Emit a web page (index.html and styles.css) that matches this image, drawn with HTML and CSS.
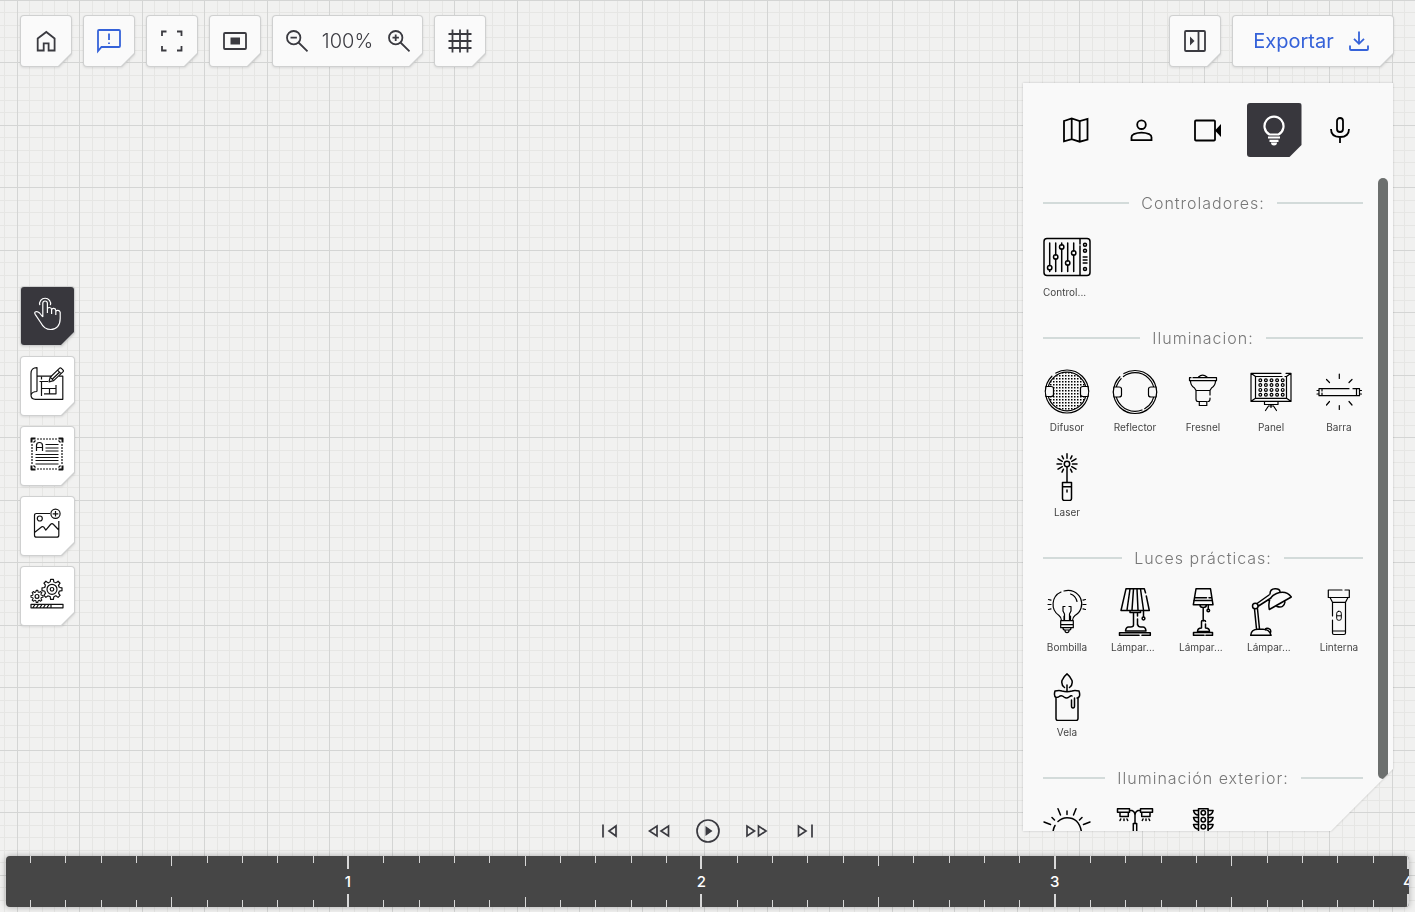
FILE: index.html
```html
<!DOCTYPE html>
<html lang="es">
<head>
    <meta charset="UTF-8">
    <meta name="viewport" content="width=device-width, initial-scale=1.0">
    <title>Editor de escenas</title>
    <link rel="stylesheet" href="styles.css">
</head>
<body>
    <div class="editor">
        <header class="topbar">
            <button type="button" class="btn" aria-label="Inicio">
                <svg width="24" height="24" viewBox="0 0 24 24"><path d="M3.7 21.5V9.5L12.3 3l8.3 6.5v12h-6v-7.2H9.7v7.2z"/></svg>
            </button>
            <button type="button" class="btn btn-blue" aria-label="Comentarios">
                <svg width="26" height="26" viewBox="0 0 26 26"><path d="M2 23V3q0-1 1-1h20q1 0 1 1v15q0 1-1 1H5.5zM13 5.500v6.500M13 14.500v1.500"/></svg>
            </button>
            <button type="button" class="btn" aria-label="Pantalla completa">
                <svg width="24" height="24" viewBox="0 0 24 24"><path d="M2 7V2.500H6.500M17 2.500h4.500V7M21.500 17v4.500H17M6.500 21.500H2V17"/></svg>
            </button>
            <button type="button" class="btn" aria-label="Ajustar">
                <svg width="26" height="24" viewBox="0 0 26 24"><rect x="2" y="4" width="22" height="16" rx="1"/><path class="fill" d="M8.500 8.500h9.500v7H8.500z"/></svg>
            </button>
            <div class="btn zoom">
                <button type="button" class="plain" aria-label="Alejar">
                    <svg width="24" height="24" viewBox="0 0 24 24"><circle cx="8.700" cy="8.700" r="6.700"/><path d="M13.500 13.500l9 8.800M5.500 8.700h6.400"/></svg>
                </button>
                <span class="zoom-value">100%</span>
                <button type="button" class="plain" aria-label="Acercar">
                    <svg width="24" height="24" viewBox="0 0 24 24"><circle cx="8.700" cy="8.700" r="6.700"/><path d="M13.500 13.500l9 8.800M5.500 8.700h6.400M8.700 5.500v6.400"/></svg>
                </button>
            </div>
            <button type="button" class="btn" aria-label="Cuadrícula">
                <svg width="24" height="24" viewBox="0 0 24 24"><path d="M4.500.5v23M12 .5v23M19.500.5v23M.5 5h23M.5 12h23M.5 19h23"/></svg>
            </button>
            <button type="button" class="btn push" aria-label="Ocultar panel">
                <svg width="24" height="24" viewBox="0 0 24 24"><rect x="2" y="2" width="20" height="20" rx="1"/><path d="M15.500 2v20"/><path class="fill" d="M7 7.500l4.500 4.500L7 16.500z"/></svg>
            </button>
            <button type="button" class="btn btn-blue export">
                <span>Exportar</span>
                <svg width="24" height="24" viewBox="0 0 24 24"><path d="M12 2.500v12M7 9.800l5 5 5-5M3 16.500V20q0 1 1 1h16q1 0 1-1v-3.500"/></svg>
            </button>
        </header>

        <nav class="tools" aria-label="Herramientas">
            <button type="button" class="btn tool active" aria-label="Seleccionar">
                <svg width="34" height="34" viewBox="0 0 34 34"><path d="M12.800 20V6.300a2.300 2.300 0 0 1 4.600 0V16M17.400 12.500q0-2 2-2t2.200 2V17M21.600 13q.2-1.800 2.200-1.600t2 2V18M25.800 14.500q.3-1.400 2.200-1.200t2.200 2V21.500c0 7-3.700 11-9.500 11-5.200 0-7.700-2.500-9.700-6.500l-5.800-8.700q-1.200-2 .6-2.600t3.800 1.300l3.200 4"/><path d="M9.800 8.200a5.500 5.500 0 1 1 10.600 0"/></svg>
            </button>
            <button type="button" class="btn tool" aria-label="Plano">
                <svg width="34" height="34" viewBox="0 0 34 34"><path d="M7 24.500V.7Q1 .7 1 6.500V28q0 4.300 4.500 4.300h27.300V9.200H29M7 9.200h14.500M1 28q1-3.500 6-3.500"/><path d="M11.500 9.500v3M9.500 14.500H18M11.500 14.500V29M11.500 21.500h14.500V18M19.500 21.500v5.300M14 26.800h12v-5.300"/><path d="M19 14.800l1.200-4.600 9.200-8.800q1-.9 2 0l1.500 1.500q1 1 0 2l-9.200 8.700zM20.200 10.200l3.400 3.400M27.500 3.200l3.500 3.500M22.500 12l7-6.800"/></svg>
            </button>
            <button type="button" class="btn tool" aria-label="Texto">
                <svg width="34" height="34" viewBox="0 0 34 34"><path class="dashed" d="M7 2h20M7 32h20M2 7v20M32 7v20"/><path class="bold" d="M1.500 5.500V1.500h4M28.500 1.500h4v4M32.500 28.500v4h-4M5.500 32.500h-4v-4"/><path d="M3.500 5.500l2-2M28.500 3.500l2 2M3.500 28.500l2 2M30.500 28.500l-2 2"/><path d="M6.500 14V8.500q0-3 3-3t3 3V14M6.500 10.500h6M15.500 7.500h13M15.500 11h13M15.500 14h13M5.500 17.500h23M5.500 20.500h23M5.500 23.500h23M5.500 27h23"/></svg>
            </button>
            <button type="button" class="btn tool" aria-label="Imagen">
                <svg width="34" height="34" viewBox="0 0 34 34"><path d="M20 6.500H6.500q-2 0-2 2v19.700q0 2 2 2h20.300q2 0 2-2V14M4.500 25.500l7.300-5.700q1-.7 2 .3l2 3 4.700-5.600q1.500-1.700 3 0l5.300 5.500"/><circle cx="9.800" cy="11.500" r="2.500"/><circle cx="25.500" cy="6.800" r="4.600"/><path d="M25.500 4v5.600M22.700 6.800h5.600"/></svg>
            </button>
            <button type="button" class="btn tool" aria-label="Ajustes">
                <svg width="34" height="34" viewBox="0 0 34 34">
                    <defs><path id="tooth" d="M7.300-1.800 10-1.400V1.400L7.300 1.800A7.500 7.500 0 0 1 6.430 3.890"/></defs>
                    <g id="gear" transform="translate(22 12.300)">
                        <use href="#tooth"/><use href="#tooth" transform="rotate(45)"/><use href="#tooth" transform="rotate(90)"/><use href="#tooth" transform="rotate(135)"/><use href="#tooth" transform="rotate(180)"/><use href="#tooth" transform="rotate(225)"/><use href="#tooth" transform="rotate(270)"/><use href="#tooth" transform="rotate(315)"/>
                    </g>
                    <circle cx="22" cy="12.300" r="5"/><circle cx="22" cy="12.300" r="1.800"/>
                    <use class="small-gear" href="#gear" transform="translate(-6.200 12) scale(.6)"/>
                    <circle cx="7" cy="19.400" r="1.900"/>
                    <path d="M1 27.300h32v3.500H1zM3 30.500l2-3M6.500 30.500l2-3M10 30.500l2-3M13.500 30.500l2-3M17 30.500l2-3M21 27.500v3"/>
                </svg>
            </button>
        </nav>

        <aside class="panel-wrap">
            <div class="panel">
                <nav class="tabs" aria-label="Categorías">
                    <button type="button" class="tab" aria-label="Escenarios">
                        <svg width="28" height="28" viewBox="0 0 28 28"><path d="M2 5l7.700-2.500 8 2.500 7.800-2v20.500l-7.800 2.200-8-2.500-7.700 2.200zM9.700 2.500v20.700M17.700 5v20.700"/></svg>
                    </button>
                    <button type="button" class="tab" aria-label="Personajes">
                        <svg width="28" height="28" viewBox="0 0 28 28"><circle cx="13.500" cy="8.700" r="4.300"/><path d="M3.500 24.200v-3q0-2 2.200-3Q9.500 16.700 13.500 16.700t7.800 1.500q2.200 1 2.200 3v3z"/></svg>
                    </button>
                    <button type="button" class="tab" aria-label="Cámaras">
                        <svg width="28" height="28" viewBox="0 0 28 28"><rect x="1" y="4.500" width="20" height="20" rx="1"/><path class="fill" d="M21 14.500l6-6.500v13z"/></svg>
                    </button>
                    <button type="button" class="tab active" aria-label="Luces">
                        <svg width="28" height="32" viewBox="0 0 28 32"><path d="M9.500 20.500a9.500 9.500 0 1 1 9 0z"/><path d="M8 23.500h12M9.500 26.800h9"/><path class="fill" d="M11 28.500h6q0 3-3 3t-3-3z"/></svg>
                    </button>
                    <button type="button" class="tab" aria-label="Sonido">
                        <svg width="28" height="28" viewBox="0 0 28 28"><rect x="11" y="2" width="6" height="14" rx="3"/><path d="M5 13q0 8 9 8t9-8M14 21v6"/></svg>
                    </button>
                </nav>

                <div class="scroll">
                    <div class="sections">
                        <section class="section">
                            <h2>Controladores:</h2>
                            <div class="items">
                                <button type="button" class="item"><svg viewBox="0 0 48 48"><rect x="1" y="5.500" width="46" height="37" rx="3"/><path d="M37 6v5M37 13v29M6.700 10v22.500M6.700 37v1.500M12.700 10v12M12.700 26v12.500M18.700 10v2M18.700 16v22.500M24.700 10v18M24.700 32v6.500M30.700 10v8M30.700 22v16.500M40.200 24H44M40.200 27H44M40.200 30H44"/><circle cx="6.700" cy="34.700" r="2.200"/><circle cx="12.700" cy="24" r="2.200"/><circle cx="18.700" cy="14" r="2.200"/><circle cx="24.700" cy="30" r="2.200"/><circle cx="30.700" cy="20" r="2.200"/><circle cx="42" cy="11.700" r="1.500"/><circle cx="42" cy="17.700" r="1.500"/><circle cx="42" cy="36" r="1.500"/></svg><span class="cut">Control...</span></button>
                            </div>
                        </section>

                        <section class="section">
                            <h2>Iluminacion:</h2>
                            <div class="items">
                                <button type="button" class="item thin"><svg viewBox="0 0 48 48"><defs><pattern id="mesh" width="3" height="3" patternUnits="userSpaceOnUse"><path class="fill" d="M1 1h1.500v1.500H1z"/></pattern></defs><circle class="mesh" cx="24" cy="23.500" r="19.300"/><circle cx="24" cy="23.500" r="21.500" stroke-dasharray="84 5 46 0"/><path class="paper" d="M3 18.500h5q2.500 0 2.500 2v6q0 2-2.500 2H3q-1.500-5 0-10zM45 18.500h-5q-2.500 0-2.500 2v6q0 2 2.500 2h5q1.500-5 0-10z"/></svg><span>Difusor</span></button>
                                <button type="button" class="item thin"><svg viewBox="0 0 48 48"><circle cx="24" cy="24" r="21.500" stroke-dasharray="84 5 46 0"/><circle cx="24" cy="24" r="19.300" stroke-dasharray="20 3 52 3 44 0"/><path class="paper" d="M3 19h5q2.500 0 2.500 2v6q0 2-2.500 2H3q-1.500-5 0-10zM45 19h-5q-2.500 0-2.500 2v6q0 2 2.500 2h5q1.500-5 0-10z"/></svg><span>Reflector</span></button>
                                <button type="button" class="item thin"><svg viewBox="0 0 48 48"><path d="M14 9.700h23.500v3H10.500v-3h1.500M19.500 9q4-3.800 8.500 0M11.500 13q0 4.500 4 7l1.500 2.500h14l1.500-2.500q4-2.500 4-7M17 22v9q0 2.500 2 2.500h8M31 22v5M31 30v1q0 2.500-2 2.500M20.300 33.500v4h7.500v-4"/></svg><span>Fresnel</span></button>
                                <button type="button" class="item thin"><svg viewBox="0 0 48 48"><path d="M34 5.300H4v28h40v-28h-5M8.500 8.500H35M38 8.500h1.500v21.800H8.500V8.500M4 5.300l4.500 3.200M44 5.300l-4.500 3.200M4 33.300l4.500-3M44 33.300l-4.500-3M17.500 33.500v3h13.500v-3M24 36.500v3M21.500 38h5M21.500 38l-3 4.500M26.500 38l3 4.500"/><g class="bulbs"><path d="M13.300 12.300h22.500M13.300 17.100h22.500M13.300 21.900h22.500M13.300 26.700h22.500"/></g><g class="bulb-holes"><path d="M13.300 12.300h22.500M13.300 17.100h22.500M13.300 21.900h22.500M13.300 26.700h22.500"/></g></svg><span>Panel</span></button>
                                <button type="button" class="item thin"><svg viewBox="0 0 48 48"><path d="M34 20.700H4v7h40.500v-7H38M7 21v2M7 25v2.500M41.500 21v6.500M3.500 22.500H2M3.500 26H2M44.500 22.500h2M44.500 26h2M24.300 6v4.500M24.300 37.500v4M11.500 11.500l3 3M37 11.500l-3 3M11.500 37l3-3.500M37 37l-3-3.500"/></svg><span>Barra</span></button>
                                <button type="button" class="item"><svg viewBox="0 0 48 48"><circle cx="24" cy="11" r="2.700"/><path d="M24 .8v4.500M24 14v15M14 11h4.500M29.500 11h4.500M15 5.800l4.300 2.500M33 5.800l-4.300 2.500M15 16.200l4.300-2.500M33 16.200l-4.300-2.500M19 2.800l1.500 3M29 2.800l-1.500 3M19 19.200l1.500-3M29 19.200l-1.500-3"/><path d="M19.500 29.500h9v16q0 2-2 2h-5q-2 0-2-2zM19.500 33.700h9M24 37v2"/></svg><span>Laser</span></button>
                            </div>
                        </section>

                        <section class="section">
                            <h2>Luces prácticas:</h2>
                            <div class="items">
                                <button type="button" class="item thin"><svg viewBox="0 0 48 48"><path d="M21 3a13.500 13.500 0 0 1 11 24.500q-2.500 2-2.500 5h-2V28M18 4a13.500 13.500 0 0 0-2 23.500q2.500 2 2.500 5h2.500V28M27.500 6q5 1.500 6.500 7.500M21.500 32V26l-1.500-3v-4.500h2M26.500 32V26l1.500-3v-4.500h-2M17.700 32.700h12.600v4H17.700zM17.700 36.700h12.600v3H17.700zM20 40q0 2 2 2h4q2 0 2-2M22 42.500q0 2.200 2 2.200t2-2.200M5 16.500h3M5.500 11.500l2.500.7M5.500 21.500l2.500-.7M43 16.500h-3M42.500 11.500l-2.500.7M42.500 21.500l-2.500-.7"/></svg><span>Bombilla</span></button>
                                <button type="button" class="item"><svg viewBox="0 0 48 48"><path d="M15 .8h18.300l1.200 4M35.300 8l3 14.500H10L15 .8M19 1l-3 21M22.500 1l-1.500 21M26 1l1 21M29.500 1l3 21M19 22.500v2h10.500v-2M22.500 25v12M26.500 25v3M26.500 31v6M22.500 37q0 2-3 2h-2q-2.500 0-3 4h20.500q-.5-4-3-4h-2q-3 0-3-2M28 47.300H8.500v-2.600h30.800v2.600H31M32.500 22.500v6"/><circle cx="32.500" cy="30.500" r="1.400"/></svg><span class="cut">Lámpar...</span></button>
                                <button type="button" class="item"><svg viewBox="0 0 48 48"><path d="M17 .8h14.500l2.500 16H14.300zM15.500 9.700h12M30 9.700h2.500M14.800 12.500h18.500M21 17q0 2.500 3.200 2.500t3.200-2.500M24.200 19.500V33M22.500 40v-6.500q0-1 1-1h2q1 0 1 1M26.500 36v4M22.500 40q-4 0-4 3.500h12q0-3.500-4-3.500M29.300 17v4M25 47.300H14.500v-2.800h19v2.800H27"/><circle cx="29.300" cy="22.500" r="1.300"/></svg><span class="cut">Lámpar...</span></button>
                                <button type="button" class="item"><svg viewBox="0 0 48 48"><circle cx="8.300" cy="18" r="2.800"/><path d="M10 15.500L22 7M11.500 18L24 10M7.500 21l2 20M10.500 21l2 20M3.700 47.300q.5-6 7.300-6h5q6.500 0 8 6zM18.500 42q0-2.500 3-1.500t2 4M22.300 21.500Q20 9 29.500 5.500T44.300 9zM23 6q0-5 5-5.200T33 4M30 18.500q7 2 8-4.500"/></svg><span class="cut">Lámpar...</span></button>
                                <button type="button" class="item thin"><svg viewBox="0 0 48 48"><path d="M30 2h4.300v7.500h-21V2H27M15 9.500l2.500 4.800h13L33 9.500M17.500 14.500V28M17.500 32v13q0 1.500 1.500 1.500h10q1.500 0 1.500-1.500V14.500M17.500 43h13"/><rect class="hair" x="21.700" y="23.300" width="4.600" height="9" rx="2"/><path class="hair" d="M22 27.800h4"/></svg><span>Linterna</span></button>
                                <button type="button" class="item"><svg viewBox="0 0 48 48"><path d="M21.500 14.500q-3.500-2.500-2.500-7Q20.500 3.500 24 .8q3.500 2.700 5 6.700 1 4.500-2.500 7M24 12V18M12 18q4.500-1 7 0 5 1.500 10 0 2.500-1 7 0 1 3 .5 5-.5 2-2.500 2M12 18q-1.500 5 1 6.500 2.500 0 4-1.500 2-1 4 1 2.500 2 5 0t3-1M13 24.500v21q0 2 2 2h18q2 0 2-2V24.500M28.500 27v6q0 2 1.500 2t1.500-2v-8"/></svg><span>Vela</span></button>
                            </div>
                        </section>

                        <section class="section">
                            <h2>Iluminación exterior:</h2>
                            <div class="items">
                                <button type="button" class="item" aria-label="Sol"><svg viewBox="0 0 48 48"><path d="M10 24q.5-4 2-6.500M15 13.500q4-3.700 9-3.700 12 0 14.500 14.200M15 .8L17.500 7M24 3v3.500M33 .8L30.500 7M9 9.500l2.500 2.500M39 9.500l-2.500 2.500M1 14l6.500 2.500M47 14l-6.500 2.500M1 24h46"/></svg></button>
                                <button type="button" class="item" aria-label="Farola"><svg viewBox="0 0 48 48"><path d="M6.500.8h12v3.500h-12zM9 4.500v4h8.300v-4M29.500.8h12v3.500h-12zM30.700 4.500v4H39v-4M18.500 2.300q5.500 0 5.500 5 0-5 5.500-5M24 5v10.500M22.300 46V15.500h3.400V46M9.700 11l-.7 1.500M13 11v1.500M16 11l.7 1.500M32 11l-.7 1.500M35 11v1.500M38 11l.7 1.500"/></svg></button>
                                <button type="button" class="item" aria-label="Semáforo"><svg viewBox="0 0 48 48"><rect x="19.500" y=".8" width="9.600" height="24"/><circle cx="24.300" cy="4.700" r="2.200"/><circle cx="24.300" cy="11.700" r="2.200"/><circle cx="24.300" cy="18.700" r="2.200"/><path d="M19.500 2.500h-5q1 4.500 5 4.500M19.500 9.500h-5q1 4.500 5 4.500M19.500 16.500h-5q1 4.500 5 4.500M29.100 2.500h5q-1 4.500-5 4.500M29.100 9.500h5q-1 4.500-5 4.500M29.100 16.500h5q-1 4.500-5 4.500"/></svg></button>
                            </div>
                        </section>
                    </div>
                    <div class="scrollbar"></div>
                </div>
            </div>
        </aside>

        <div class="playback">
            <button type="button" class="plain" aria-label="Ir al inicio"><svg width="24" height="24" viewBox="0 0 24 24"><path d="M5 5.500v13M18 7v10l-7-5z"/></svg></button>
            <button type="button" class="plain" aria-label="Retroceder"><svg width="24" height="24" viewBox="0 0 24 24"><path d="M10 7v10l-7.500-5zM21.500 7v10L14 12z"/></svg></button>
            <button type="button" class="plain" aria-label="Reproducir"><svg width="24" height="24" viewBox="0 0 24 24"><circle cx="12" cy="12" r="11"/><path class="fill" d="M9.500 7l7 5-7 5z"/></svg></button>
            <button type="button" class="plain" aria-label="Avanzar"><svg width="24" height="24" viewBox="0 0 24 24"><path d="M2 7v10l7.500-5zM13.500 7v10l7.500-5z"/></svg></button>
            <button type="button" class="plain" aria-label="Ir al final"><svg width="24" height="24" viewBox="0 0 24 24"><path d="M4.500 7v10l7.500-5zM18 5.500v13"/></svg></button>
        </div>

        <footer class="timeline" id="timeline"></footer>
    </div>

    <script>
        const timeline = document.getElementById('timeline');

        for (let i = 1; i <= 40; i++) {
            const cell = document.createElement('div');
            cell.className = 'cell';
            if (i % 10 === 0) {
                cell.classList.add('second');
                const label = document.createElement('span');
                label.textContent = i / 10;
                cell.appendChild(label);
            } else if (i % 5 === 0) {
                cell.classList.add('half');
            }
            timeline.appendChild(cell);
        }
    </script>
</body>
</html>
```
FILE: styles.css
```css
* {
    box-sizing: border-box;
}
body {
    margin: 0;
    font-family: Inter, "Liberation Sans", sans-serif;
    color: #3a3a40;
    background-color: #f1f1f0;
    /* two lines per tile: 125px for the large squares, 25px for the small ones */
    background-image:
        linear-gradient(90deg, #d4d5d4 1px, transparent 1px, transparent 62px, #d4d5d4 62px, #d4d5d4 63px, transparent 63px),
        linear-gradient(#d4d5d4 1px, transparent 1px, transparent 62px, #d4d5d4 62px, #d4d5d4 63px, transparent 63px),
        linear-gradient(90deg, #e6e6e4 1px, transparent 1px, transparent 12px, #e6e6e4 12px, #e6e6e4 13px, transparent 13px),
        linear-gradient(#e6e6e4 1px, transparent 1px, transparent 12px, #e6e6e4 12px, #e6e6e4 13px, transparent 13px);
    background-size: 125px 125px, 125px 125px, 25px 25px, 25px 25px;
    background-position: 17px 0;
}
button {
    font: inherit;
    color: inherit;
    border: none;
    padding: 0;
    background: none;
    cursor: pointer;
}
svg {
    display: block;
    fill: none;
    stroke: currentColor;
    stroke-width: 1.8;
}
.fill {
    fill: currentColor;
    stroke: none;
}
.editor {
    display: grid;
    grid-template-columns: auto 1fr 370px;
    grid-template-rows: auto 1fr auto auto;
    height: 100vh;
    overflow: hidden;
}

/* top bar */
.topbar {
    grid-area: 1 / 1 / 2 / -1;
    display: flex;
    gap: 11px;
    padding: 15px 21px 16px 20px;
    filter: drop-shadow(0 1px 1px rgba(0, 0, 0, 0.1));
}
.btn {
    position: relative;
    isolation: isolate;
    display: flex;
    align-items: center;
    justify-content: center;
    width: 52px;
    height: 52px;
    border-radius: 4px;
    background-color: #cfd0d0;
    clip-path: polygon(0 0, 100% 0, 100% calc(100% - 13px), calc(100% - 13px) 100%, 0 100%);
}
.btn::before {
    content: "";
    position: absolute;
    inset: 1px;
    z-index: -1;
    border-radius: 3px;
    background-color: #fafafa;
    clip-path: polygon(0 0, 100% 0, 100% calc(100% - 13px), calc(100% - 13px) 100%, 0 100%);
}
.btn-blue {
    color: #3562d9;
}
.zoom {
    width: 151px;
    gap: 13px;
}
.zoom-value {
    width: 52px;
    font-size: 20px;
    font-weight: 300;
    text-align: center;
}
.push {
    margin-left: auto;
}
.export {
    width: 162px;
    gap: 13px;
    padding-right: 2px;
    font-size: 20px;
}

/* left tools */
.tools {
    grid-area: 1 / 1 / -1 / 2;
    align-self: center;
    display: flex;
    flex-direction: column;
    gap: 10px;
    padding-left: 20px;
    filter: drop-shadow(0 1px 1px rgba(0, 0, 0, 0.1));
}
.tool {
    width: 55px;
    height: 60px;
    padding: 0 1px 4px 0;
    color: #111;
}
.tool::before {
    background-color: #fff;
}
.tool svg {
    stroke-width: 1.2;
    stroke-linejoin: round;
}
.tool.active {
    color: #fff;
}
.tool.active::before {
    background-color: #38373d;
}
.dashed {
    stroke-dasharray: 2 1;
}
.bold {
    stroke-width: 2;
}
.small-gear {
    stroke-width: 1.8;
}

/* right panel */
.panel-wrap {
    grid-area: 2 / 3 / 4 / 4;
    min-height: 0;
    margin: 0 22px 25px -22px;
    filter: drop-shadow(0 0 1px rgba(0, 0, 0, 0.2));
}
.panel {
    display: flex;
    flex-direction: column;
    height: 100%;
    padding-top: 20px;
    background-color: #f9f9f9;
    clip-path: polygon(0 0, 100% 0, 100% calc(100% - 62px), calc(100% - 62px) 100%, 0 100%);
}
.tabs {
    display: flex;
    justify-content: center;
    gap: 11px;
    margin-bottom: 21px;
}
.tab {
    display: flex;
    align-items: center;
    justify-content: center;
    width: 55px;
    height: 54px;
    border-radius: 3px;
    color: #000;
}
.tab.active {
    color: #fff;
    background-color: #38373d;
    clip-path: polygon(0 0, 100% 0, 100% calc(100% - 12px), calc(100% - 12px) 100%, 0 100%);
}
.tab.active svg {
    stroke-width: 2.2;
}
.scroll {
    flex: 1;
    min-height: 0;
    display: flex;
    justify-content: space-between;
    overflow: hidden;
    padding: 0 5px 0 20px;
}
.scrollbar {
    width: 10px;
    margin-bottom: 52px;
    border-radius: 5px;
    background-color: #6c6f6e;
}
.sections {
    width: 320px;
    padding-top: 15px;
}
.section {
    margin-bottom: 30px;
}
.section h2 {
    display: flex;
    align-items: center;
    gap: 12px;
    margin: 0 0 20px;
    font-size: 16px;
    font-weight: 300;
    line-height: 20px;
    letter-spacing: 1px;
    color: #777;
}
.section h2::before,
.section h2::after {
    content: "";
    flex: 1;
    height: 2px;
    background-color: #d3dbda;
}
.items {
    display: grid;
    grid-template-columns: repeat(5, 48px);
    gap: 20px;
}
.item {
    display: flex;
    flex-direction: column;
    gap: 5px;
    color: #444;
    font-size: 10px;
    line-height: 12px;
    white-space: nowrap;
}
.item span {
    align-self: center;
}
.item .cut {
    align-self: flex-start;
}
.item svg {
    width: 48px;
    height: 48px;
    color: #000;
    stroke-width: 1.5;
    stroke-linecap: round;
    stroke-linejoin: round;
}
.item.thin svg {
    stroke-width: 1.2;
}
.item .hair {
    stroke-width: 1;
}
.mesh {
    fill: url(#mesh);
}
.paper {
    fill: #f9f9f9;
}
/* rows of round dots, then a lighter centre on top */
.bulbs {
    stroke-width: 4;
    stroke-dasharray: 0 5.6;
}
.bulb-holes {
    stroke: #f9f9f9;
    stroke-width: 1.6;
    stroke-dasharray: 0 5.6;
}

/* playback */
.playback {
    grid-area: 3 / 1 / 4 / -1;
    justify-self: center;
    display: flex;
    gap: 25px;
    margin-bottom: 13px;
}
.playback svg {
    overflow: visible;
    stroke-width: 1.7;
}

/* timeline */
.timeline {
    grid-area: 4 / 1 / 5 / -1;
    display: grid;
    grid-template-columns: 25px repeat(39, 1fr);
    height: 51px;
    margin: 0 6px 5px;
    overflow: hidden;
    border-radius: 4px;
    background-color: #464646;
    box-shadow: 0 0 6px rgba(0, 0, 0, 0.3);
}
.cell {
    display: flex;
    flex-direction: column;
    align-items: flex-end;
    justify-content: space-between;
    min-width: 0;
}
.cell::before,
.cell::after {
    content: "";
    width: 1px;
    height: 7px;
    background-color: #d8d8d8;
}
.half::before,
.half::after {
    height: 10px;
}
.second::before,
.second::after {
    width: 2px;
    height: 13px;
}
.cell span {
    width: 24px;
    margin-right: -11px;
    color: #fff;
    font-size: 15px;
    font-weight: 500;
    line-height: 20px;
    text-align: center;
}
```
